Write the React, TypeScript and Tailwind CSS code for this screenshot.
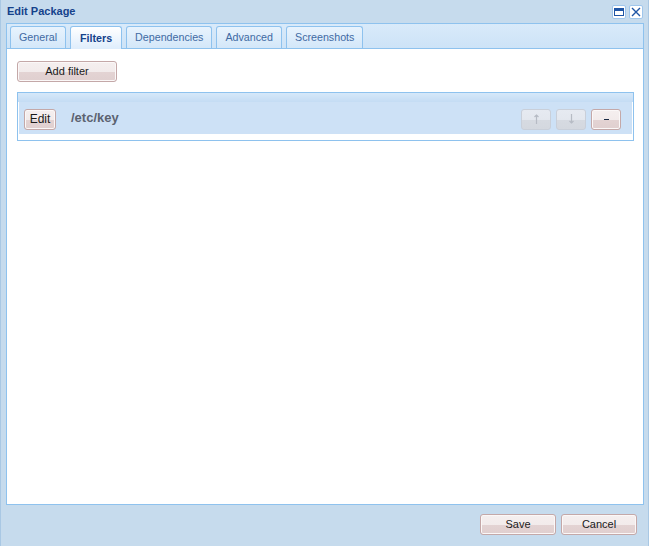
import React from "react"

const tabs = ["General", "Filters", "Dependencies", "Advanced", "Screenshots"]

function Btn({ children, className = "" }: { children: React.ReactNode; className?: string }) {
  return (
    <button
      className={`flex h-[21px] items-center justify-center rounded-[3px] border border-[#c4a8a8] bg-[linear-gradient(#f5efef_0%,#f2ebeb_55%,#e3d3d3_55%,#e0cfcf_100%)] text-[11px] text-[#1a1a1a] shadow-[inset_0_0_0_1px_#fbf8f8] ${className}`}
    >
      {children}
    </button>
  )
}

function DisabledBtn({ children }: { children: React.ReactNode }) {
  return (
    <button className="flex h-[21px] w-[30px] items-center justify-center rounded-[3px] border border-[#c9cfd9] bg-[linear-gradient(#e6eaf1_0%,#e3e7ee_55%,#d6dae1_55%,#d4d8df_100%)]">
      {children}
    </button>
  )
}

export default function App() {
  return (
    <div
      className="flex h-[546px] w-[649px] flex-col border-x border-[#a9c8e4] bg-[#c6dbed]"
      style={{ fontFamily: '"Liberation Sans", Arial, sans-serif' }}
    >
      {/* title bar */}
      <div className="flex h-[23px] items-center justify-between pl-[6px] pr-[5px]">
        <span className="text-[11px] font-bold text-[#15428b]">Edit Package</span>
        <div className="flex gap-[3px]">
          <div className="flex h-[14px] w-[14px] items-center justify-center rounded-[2px] border border-[#9fc6ec] bg-white">
            <div className="h-[8px] w-[10px] border border-t-[3px] border-[#1f55a5]" />
          </div>
          <div className="flex h-[14px] w-[14px] items-center justify-center rounded-[2px] border border-[#9fc6ec] bg-white">
            <svg width="10" height="10" viewBox="0 0 10 10">
              <path d="M1 1L9 9M9 1L1 9" stroke="#1f55a5" strokeWidth="1.4" />
            </svg>
          </div>
        </div>
      </div>

      {/* panel */}
      <div className="ml-[5px] mr-[4px] flex flex-1 flex-col border border-[#8ec2ee]">
        <div className="flex h-[25px] items-end gap-[4px] border-b border-[#8ec2ee] bg-[linear-gradient(#d9eafa,#cde3f7)] pl-[3px]">
          {tabs.map((t) => {
            const active = t === "Filters"
            return (
              <div
                key={t}
                className={`flex h-[22px] items-center rounded-t-[3px] border border-b-0 border-[#8ec2ee] text-[10.7px] ${
                  active
                    ? "-mb-[1px] h-[23px] bg-[linear-gradient(#ffffff,#deedfc)] px-[9px] font-bold text-[#15428b]"
                    : "bg-[linear-gradient(#e8f3fd,#d3e7f9)] px-[8px] text-[#416aa3]"
                }`}
              >
                {t}
              </div>
            )
          })}
        </div>

        <div className="flex flex-1 flex-col bg-white pl-[10px] pr-[9px] pt-[12px]">
          <Btn className="w-[100px]">Add filter</Btn>

          <div className="mt-[10px] border border-[#8ec2ee] pb-[6px]">
            <div className="h-[9px] bg-[linear-gradient(#d6e8f9,#c4dcf4)]" />
            <div className="mx-[1px] flex h-[32px] items-center bg-[#cde1f6] pl-[5px] pr-[11px]">
              <Btn className="mt-[2px] w-[32px] text-[12px]">Edit</Btn>
              <span className="ml-[15px] text-[13px] font-bold text-[#5b6270]">/etc/key</span>
              <div className="ml-auto mt-[2px] flex gap-[5px]">
                <DisabledBtn>
                  <svg width="7" height="10" viewBox="0 0 7 10">
                    <path d="M3.5 1V10M1.5 3L3.5 1L5.5 3" stroke="#b6bbc4" strokeWidth="1.2" fill="none" />
                  </svg>
                </DisabledBtn>
                <DisabledBtn>
                  <svg width="7" height="10" viewBox="0 0 7 10">
                    <path d="M3.5 0V9M1.5 7L3.5 9L5.5 7" stroke="#b6bbc4" strokeWidth="1.2" fill="none" />
                  </svg>
                </DisabledBtn>
                <Btn className="w-[30px]">
                  <span className="block h-[1px] w-[5px] bg-[#1a2a44]" />
                </Btn>
              </div>
            </div>
          </div>
        </div>
      </div>

      {/* footer */}
      <div className="flex h-[41px] items-start justify-end gap-[5px] pr-[11px] pt-[9px]">
        <Btn className="w-[76px]">Save</Btn>
        <Btn className="w-[76px]">Cancel</Btn>
      </div>
    </div>
  )
}
